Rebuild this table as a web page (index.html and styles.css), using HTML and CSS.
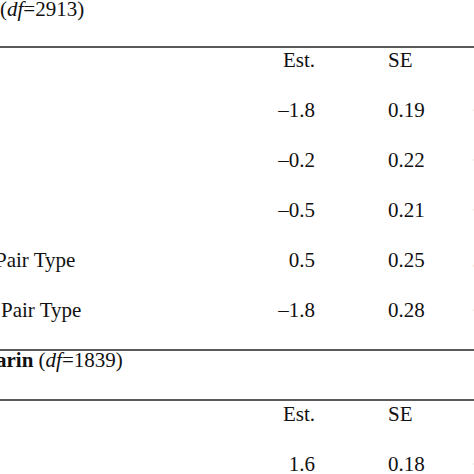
FILE: index.html
```html
<!DOCTYPE html>
<html>
<head>
<meta charset="utf-8">
<link rel="stylesheet" href="styles.css">
</head>
<body>
<div class="sheet">
  <div class="title first">(<i>df</i>=2913)</div>
  <div class="rule"></div>
  <div class="row head"><span class="label"></span><span class="est">Est.</span><span class="se">SE</span></div>
  <div class="row"><span class="label"></span><span class="est">–1.8</span><span class="se">0.19</span><span class="p">&lt;.001</span></div>
  <div class="row"><span class="label"></span><span class="est">–0.2</span><span class="se">0.22</span><span class="p">&lt;.001</span></div>
  <div class="row"><span class="label"></span><span class="est">–0.5</span><span class="se">0.21</span><span class="p">&lt;.001</span></div>
  <div class="row"><span class="label"><span class="cut-a">Pair Type</span></span><span class="est">0.5</span><span class="se">0.25</span><span class="p">.04</span></div>
  <div class="row"><span class="label"><span class="cut-b">Pair Type</span></span><span class="est">–1.8</span><span class="se">0.28</span><span class="p">&lt;.001</span></div>
  <div class="rule"></div>
  <div class="title second"><b class="cut-c">arin</b> (<i>df</i>=1839)</div>
  <div class="rule"></div>
  <div class="row head second-head"><span class="label"></span><span class="est">Est.</span><span class="se">SE</span></div>
  <div class="row"><span class="label"></span><span class="est">1.6</span><span class="se">0.18</span><span class="p">&lt;.001</span></div>
</div>
</body>
</html>
```

FILE: styles.css
```css
html, body {
  margin: 0;
  padding: 0;
  background: #fff;
  overflow: hidden;
}
.sheet {
  width: 474px;
  height: 474px;
  overflow: hidden;
  font-family: "Liberation Serif", "Times New Roman", serif;
  font-size: 21px;
  color: #111;
}
.title {
  line-height: 16px;
  padding-top: 1px;
  white-space: nowrap;
}
.title.first {
  padding-bottom: 29px;
}
.title.second {
  padding-bottom: 31px;
}
.cut-c {
  margin-left: -4px;
}
.rule {
  border-top: 2px solid #5a5a5a;
}
.row {
  display: flex;
  height: 50px;
  line-height: 22px;
  white-space: nowrap;
}
.row.head {
  margin-top: 1px;
}
.row.second-head {
  margin-top: 2px;
}
.label {
  width: 255px;
  flex: none;
}
.cut-a {
  margin-left: -5px;
}
.cut-b {
  margin-left: 1px;
}
.est {
  width: 60px;
  flex: none;
  text-align: right;
}
.se {
  margin-left: 73px;
  width: 84px;
  flex: none;
}
.p {
  flex: none;
  color: #ddd;
}
```
